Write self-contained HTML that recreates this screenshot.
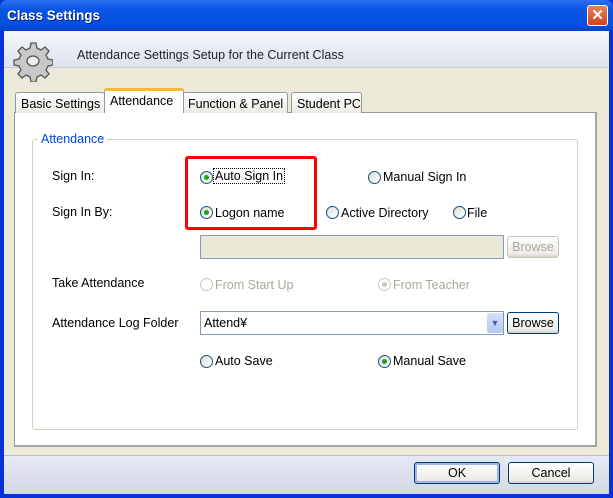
<!DOCTYPE html><html><head><style>
*{margin:0;padding:0;box-sizing:border-box}
body{width:613px;height:498px;overflow:hidden;font-family:"Liberation Sans",sans-serif;font-size:12.5px;position:relative;background:#0831d9}
.a{position:absolute}
.title{left:0;top:0;width:613px;height:31px;background:linear-gradient(#2b6ff2,#0a55e4 30%,#0650e0 80%,#0440c8);border-radius:7px 7px 0 0}
.frame{left:4px;top:31px;width:605px;height:463px;background:#ece9d8}
.hdr{left:4px;top:31px;width:605px;height:37px;background:linear-gradient(#f5f6fa,#dde2ee);border-bottom:1px solid #c8ccd6}
.tab{top:92px;height:21px;background:linear-gradient(#fff,#ecebe6);border:1px solid #919b9c;border-bottom:none;border-radius:3px 3px 0 0;padding:4px 5px;color:#000;white-space:nowrap}
.panel{left:14px;top:112px;width:583px;height:335px;background:#fff;border:1px solid #919b9c;border-bottom:2px solid #a0a8a8;border-right:2px solid #a0a8a8}
.grp{left:32px;top:139px;width:546px;height:291px;border:1px solid #d0d0bf;border-radius:3px}
.r{width:13px;height:13px;border:1px solid #1c5180;border-radius:50%;background:linear-gradient(135deg,#dcdcd6,#fff)}
.r.on::after{content:"";position:absolute;left:3px;top:3px;width:5px;height:5px;border-radius:50%;background:#21a121}
.r.dis{border-color:#cac8bb;background:#fff}
.r.dis.on::after{background:#cac8bb}
.t{color:#000;white-space:nowrap}
.g{color:#aca899}
.btn{border:1px solid #003c74;border-radius:3px;background:linear-gradient(#fff,#ecebe6 85%,#d6d0c5);text-align:center}
</style></head><body>
<div class="a title"></div>
<div class="a t" style="left:7px;top:8px;color:#fff;font-weight:bold;font-size:13.5px;text-shadow:1px 1px #0a1f70">Class Settings</div>
<div class="a" style="left:587px;top:5px;width:21px;height:21px;border:1px solid #fff;border-radius:3px;background:linear-gradient(#e8805e,#d2441c);color:#fff;font-size:15px;font-weight:bold;text-align:center;line-height:19px">✕</div>
<div class="a frame"></div>
<div class="a hdr"></div>
<svg class="a" style="left:13px;top:40px" width="40" height="42" viewBox="0 0 40 42"><g fill="#c8c8c8" stroke="#555" stroke-width="1.3"><path d="M18 3l5 0 1 5 4 2 4-3 4 4-3 4 2 4 5 1v5l-5 1-2 4 3 4-4 4-4-3-4 2-1 5h-5l-1-5-4-2-4 3-4-4 3-4-2-4-5-1v-5l5-1 2-4-3-4 4-4 4 3 4-2z"/><ellipse cx="20" cy="21" rx="6" ry="5" fill="#eee"/></g></svg>
<div class="a t" style="left:77px;top:48px;color:#222">Attendance Settings Setup for the Current Class</div>
<div class="a panel"></div>
<div class="a tab" style="left:15px;width:90px">Basic Settings</div>
<div class="a tab" style="left:182px;width:106px">Function &amp; Panel</div>
<div class="a tab" style="left:291px;width:71px">Student PC</div>
<div class="a tab" style="left:104px;top:88px;width:80px;height:25px;background:#fff;border-top:3px solid #f7b92f;padding-top:3px">Attendance</div>
<div class="a grp"></div>
<div class="a t" style="left:38px;top:132px;color:#0046d5;background:#fff;padding:0 3px">Attendance</div>
<div class="a t" style="left:52px;top:169px">Sign In:</div>
<div class="a t" style="left:52px;top:205px">Sign In By:</div>
<div class="a t" style="left:52px;top:276px">Take Attendance</div>
<div class="a t" style="left:52px;top:316px">Attendance Log Folder</div>
<div class="a r on" style="left:200px;top:171px"></div><div class="a t" style="left:214px;top:169px;outline:1px dotted #000;padding:0 1px">Auto Sign In</div>
<div class="a r" style="left:368px;top:171px"></div><div class="a t" style="left:383px;top:170px">Manual Sign In</div>
<div class="a r on" style="left:200px;top:206px"></div><div class="a t" style="left:215px;top:206px">Logon name</div>
<div class="a r" style="left:326px;top:206px"></div><div class="a t" style="left:341px;top:206px">Active Directory</div>
<div class="a r" style="left:453px;top:206px"></div><div class="a t" style="left:467px;top:206px">File</div>
<div class="a" style="left:185px;top:156px;width:132px;height:74px;border:3px solid #f00;border-radius:3px"></div>
<div class="a" style="left:200px;top:235px;width:304px;height:24px;background:#ebe8d8;border:1px solid #7f9db9"></div>
<div class="a btn g" style="left:507px;top:236px;width:52px;height:22px;border-color:#c9c7ba;line-height:20px">Browse</div>
<div class="a r dis" style="left:200px;top:278px"></div><div class="a t g" style="left:215px;top:278px">From Start Up</div>
<div class="a r dis on" style="left:378px;top:278px"></div><div class="a t g" style="left:393px;top:278px">From Teacher</div>
<div class="a" style="left:200px;top:311px;width:304px;height:24px;background:#fff;border:1px solid #7f9db9"></div>
<div class="a t" style="left:204px;top:316px">Attend¥</div>
<div class="a" style="left:487px;top:313px;width:16px;height:20px;background:linear-gradient(#d4e0fb,#b5c9f6);border-radius:2px;color:#4d6185;font-size:9px;text-align:center;line-height:20px">▼</div>
<div class="a btn" style="left:507px;top:312px;width:52px;height:22px;line-height:20px">Browse</div>
<div class="a r" style="left:200px;top:355px"></div><div class="a t" style="left:215px;top:354px">Auto Save</div>
<div class="a r on" style="left:378px;top:355px"></div><div class="a t" style="left:393px;top:354px">Manual Save</div>
<div class="a" style="left:4px;top:455px;width:605px;height:39px;background:linear-gradient(#e5e9f4,#d2d8e4);border-top:1px solid #b9bcc4"></div>
<div class="a btn" style="left:414px;top:462px;width:86px;height:22px;line-height:20px;box-shadow:inset 0 0 0 2px #9db7ea">OK</div>
<div class="a btn" style="left:508px;top:462px;width:86px;height:22px;line-height:20px">Cancel</div>
</body></html>
